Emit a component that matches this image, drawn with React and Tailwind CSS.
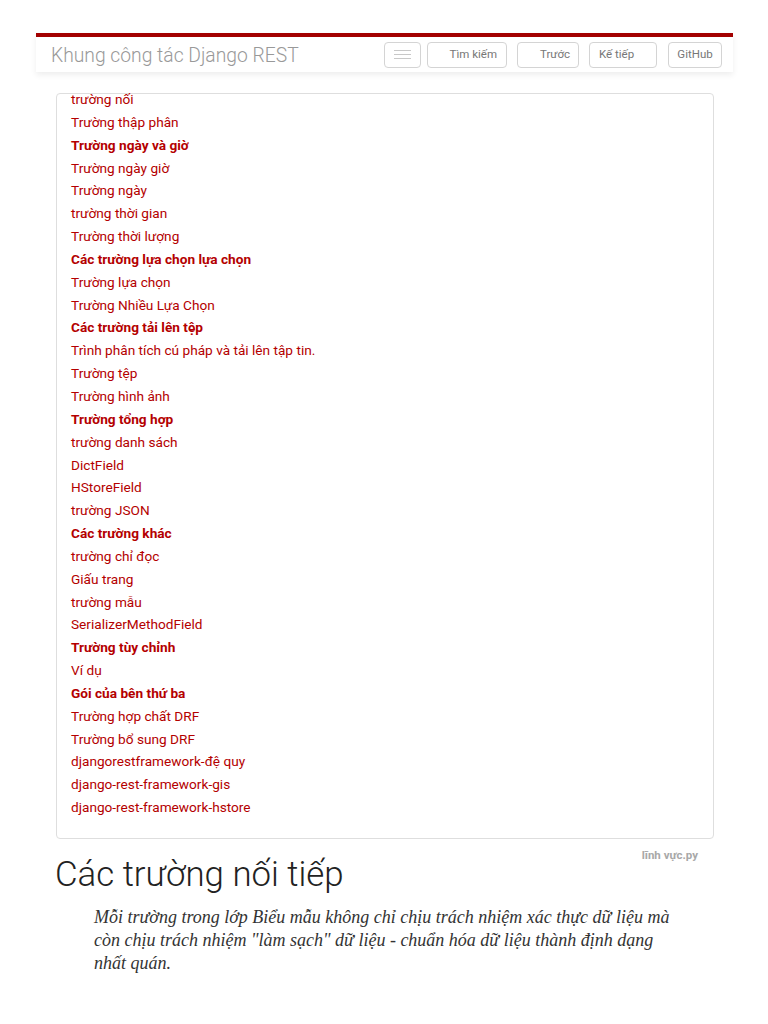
import React from "react";

const toc = [
  ["trường nối", false],
  ["Trường thập phân", false],
  ["Trường ngày và giờ", true],
  ["Trường ngày giờ", false],
  ["Trường ngày", false],
  ["trường thời gian", false],
  ["Trường thời lượng", false],
  ["Các trường lựa chọn lựa chọn", true],
  ["Trường lựa chọn", false],
  ["Trường Nhiều Lựa Chọn", false],
  ["Các trường tải lên tệp", true],
  ["Trình phân tích cú pháp và tải lên tập tin.", false],
  ["Trường tệp", false],
  ["Trường hình ảnh", false],
  ["Trường tổng hợp", true],
  ["trường danh sách", false],
  ["DictField", false],
  ["HStoreField", false],
  ["trường JSON", false],
  ["Các trường khác", true],
  ["trường chỉ đọc", false],
  ["Giấu trang", false],
  ["trường mẫu", false],
  ["SerializerMethodField", false],
  ["Trường tùy chỉnh", true],
  ["Ví dụ", false],
  ["Gói của bên thứ ba", true],
  ["Trường hợp chất DRF", false],
  ["Trường bổ sung DRF", false],
  ["djangorestframework-đệ quy", false],
  ["django-rest-framework-gis", false],
  ["django-rest-framework-hstore", false],
];

// nav buttons: label + sizing (icons of the original aren't rendered, only their space)
const navButtons = [
  ["Tìm kiếm", "w-[80px] pl-[21px] pr-[9px] justify-end"],
  ["Trước", "w-[62px] pl-[22px] pr-[8px] justify-end ml-[10px]"],
  ["Kế tiếp", "w-[68px] pl-[9px] pr-[22px] justify-start ml-[10px]"],
  ["GitHub", "w-[54px] px-[8px] justify-center ml-[11px]"],
];

export default function App() {
  return (
    <div className="min-h-[1024px] bg-white font-['Roboto','Liberation_Sans',sans-serif]">
      <div className="pt-[33px] ml-[36px] mr-[35px]">
        {/* NAVBAR */}
        <div className="border-t-[4px] border-[#a30000] bg-white h-[39px] flex items-center pl-[15px] pr-[11px] shadow-[0_3px_6px_rgba(0,0,0,0.07)]">
          <div className="pt-[3px] text-[19.3px] font-light text-[#999] whitespace-nowrap">Khung công tác Django REST</div>
          <div className="ml-auto flex items-center">
            <button className="w-[37px] h-[26px] border border-[#d4d4d4] rounded-[4px] bg-white flex flex-col items-center justify-center gap-[3px] mr-[6px]">
              <span className="block w-[17px] h-[1px] bg-[#c8c8c8]" />
              <span className="block w-[17px] h-[1px] bg-[#c8c8c8]" />
              <span className="block w-[17px] h-[1px] bg-[#c8c8c8]" />
            </button>
            {navButtons.map(([label, cls]) => (
              <button
                key={label}
                className={`h-[26px] border border-[#d4d4d4] rounded-[4px] bg-white flex items-center whitespace-nowrap text-[11.5px] text-[#777] ${cls}`}
              >
                {label}
              </button>
            ))}
          </div>
        </div>

        {/* CONTENT */}
        <div className="pl-[20px] pr-[19px] pt-[21px]">
          <div className="border border-[#dedede] rounded-[4px] pl-[14px] pb-[19px]">
            <ul className="-mt-[6px] text-[13.65px] leading-[22.84px] text-[#b40000]">
              {toc.map(([t, b], i) => (
                <li key={i} className={b ? "font-bold" : ""}>
                  {t}
                </li>
              ))}
            </ul>
          </div>

          <div className="flex justify-end pr-[16px] pt-[8px]">
            <span className="text-[11.5px] font-bold text-[#a8a8a8]">lĩnh vực.py</span>
          </div>
          <h1 className="-mt-[12px] -ml-[1px] text-[34.8px] font-light text-[#222] leading-[44px]">Các trường nối tiếp</h1>
          <blockquote className="mt-[10px] ml-[38px] mr-[28px] italic text-[18px] leading-[23px] text-[#333] font-['Liberation_Serif','DejaVu_Serif',serif]">
            Mỗi trường trong lớp Biểu mẫu không chỉ chịu trách nhiệm xác thực dữ liệu mà còn chịu trách nhiệm "làm sạch" dữ liệu - chuẩn hóa dữ liệu thành định dạng nhất quán.
          </blockquote>
        </div>
      </div>
    </div>
  );
}
